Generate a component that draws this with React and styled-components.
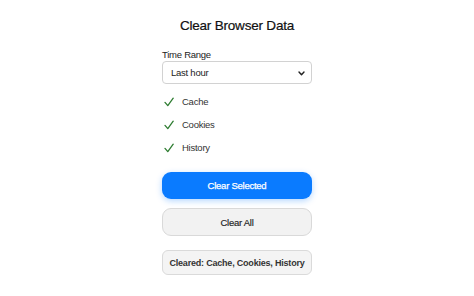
import React from "react";
import styled, { createGlobalStyle } from "styled-components";

const Global = createGlobalStyle`
  html, body { margin: 0; padding: 0; background: #fff; }
  body { font-family: "Liberation Sans", Arial, sans-serif; color: #222; }
`;

const Panel = styled.div`
  width: 150px;
  margin: 0 auto;
  padding-top: 16px;
  display: flex;
  flex-direction: column;
`;

const Title = styled.h1`
  margin: 0;
  font-size: 13.5px;
  line-height: 20px;
  letter-spacing: -0.2px;
  font-weight: 400;
  -webkit-text-stroke: 0.2px #111;
  text-align: center;
  color: #111;
`;

const Label = styled.label`
  margin-top: 12px;
  font-size: 9.5px;
  line-height: 13px;
  letter-spacing: -0.25px;
  color: #222;
`;

const SelectWrap = styled.div`
  position: relative;
`;

const Select = styled.select`
  appearance: none;
  width: 100%;
  height: 23px;
  box-sizing: border-box;
  border: 1px solid #d2d2d2;
  border-radius: 4px;
  background: #fff;
  padding: 0 20px 0 8px;
  font-family: inherit;
  font-size: 9.5px;
  letter-spacing: -0.25px;
  color: #222;
`;

const Chevron = styled.svg`
  position: absolute;
  right: 7px;
  top: 10px;
  pointer-events: none;
`;

const List = styled.ul`
  list-style: none;
  margin: 10px 0 0;
  padding: 0;
  display: flex;
  flex-direction: column;
  gap: 8px;
`;

const Item = styled.li`
  display: flex;
  align-items: center;
  gap: 8px;
  height: 15px;
  padding-left: 2px;
  font-size: 9.5px;
  letter-spacing: -0.25px;
  color: #333;
`;

const Button = styled.button`
  width: 100%;
  box-sizing: border-box;
  height: ${(p) => (p.$primary ? "27px" : "28px")};
  margin-top: ${(p) => (p.$primary ? "17px" : "9px")};
  border-radius: 9px;
  font-family: inherit;
  font-size: 9.5px;
  letter-spacing: -0.25px;
  cursor: pointer;
  ${(p) =>
    p.$primary
      ? `background:#0a7bff;color:#fff;border:none;box-shadow:0 2px 6px rgba(10,123,255,0.3);-webkit-text-stroke:0.25px #fff;`
      : `background:#f2f2f2;color:#222;border:1px solid #d9d9d9;-webkit-text-stroke:0.15px #222;`}
`;

const Status = styled.div`
  margin-top: 14px;
  height: 25px;
  box-sizing: border-box;
  border: 1px solid #dadada;
  border-radius: 6px;
  background: #f4f4f4;
  display: flex;
  align-items: center;
  justify-content: center;
  font-size: 9px;
  letter-spacing: -0.2px;
  font-weight: 700;
  white-space: nowrap;
  color: #333;
`;

const Check = () => (
  <svg width="10" height="10" viewBox="0 0 10 10">
    <path d="M1 5.4 L3.8 8.6 L9.2 1.2" fill="none" stroke="#2f7d32" strokeWidth="1.3" strokeLinecap="round" strokeLinejoin="round" />
  </svg>
);

export default function App() {
  return (
    <>
      <Global />
      <Panel>
        <Title>Clear Browser Data</Title>
        <Label htmlFor="range">Time Range</Label>
        <SelectWrap>
          <Select id="range" defaultValue="hour">
            <option value="hour">Last hour</option>
            <option value="day">Last 24 hours</option>
            <option value="week">Last 7 days</option>
            <option value="all">All time</option>
          </Select>
          <Chevron width="7" height="5" viewBox="0 0 7 5">
            <path d="M1 1 L3.5 3.8 L6 1" fill="none" stroke="#222" strokeWidth="1.4" strokeLinecap="round" strokeLinejoin="round" />
          </Chevron>
        </SelectWrap>
        <List>
          {["Cache", "Cookies", "History"].map((t) => (
            <Item key={t}>
              <Check />
              {t}
            </Item>
          ))}
        </List>
        <Button $primary>Clear Selected</Button>
        <Button>Clear All</Button>
        <Status>Cleared: Cache, Cookies, History</Status>
      </Panel>
    </>
  );
}
